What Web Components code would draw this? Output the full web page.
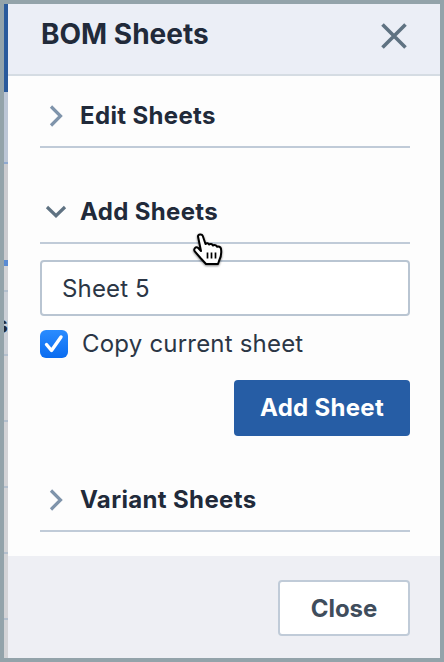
<!DOCTYPE html>
<html>
<head>
<meta charset="utf-8">
<title>BOM Sheets</title>
<style>
  html, body { margin: 0; height: 100%; }
  body { background: #93a3aa; font-family: Inter, "Liberation Sans", sans-serif; }
</style>
</head>
<body>
<bom-dialog>
  <sheet-section slot="sections" label="Edit Sheets"></sheet-section>
  <sheet-section slot="sections" label="Add Sheets" open>
    <add-sheet-form></add-sheet-form>
  </sheet-section>
  <sheet-section slot="sections" label="Variant Sheets"></sheet-section>
</bom-dialog>
<script>
// the sliver of the page that shows behind the dialog
class PageStrip extends HTMLElement {
  constructor() {
    super();
    this.attachShadow({ mode: "open" });
    const rows = [
      [88, "#2a5a9c"], [70, "#bcc6d6"], [2, "#8fa9d0"], [96, "#cbcbcf"], [6, "#5a8bd3"],
      [24, "#d3d3d6"], [2, "#b3bfcd"], [62, "#cbcfd6", "s"], [2, "#b3bfcd"], [64, "#d3d3d6"],
      [2, "#b3bfcd"], [64, "#d3d3d6"], [2, "#b3bfcd"], [64, "#d3d3d6"], [2, "#b3bfcd"],
      [64, "#d3d3d6"], [2, "#b3bfcd"], [38, "#d3d3d6"],
    ];
    this.shadowRoot.innerHTML = `
      <style>
        :host { display: flex; flex-direction: column; width: 4px; flex: none; overflow: hidden; }
        div { flex: none; display: flex; align-items: center; justify-content: flex-end; overflow: hidden; }
        span { color: #212a3a; font-size: 24px; font-weight: 700; line-height: 20px; flex: none; margin-top: 4px; }
      </style>
      ${rows.map(([h, c, t]) => `<div style="height:${h}px;background:${c}">${t ? `<span>${t}</span>` : ""}</div>`).join("")}`;
  }
}

class BomDialog extends HTMLElement {
  constructor() {
    super();
    this.attachShadow({ mode: "open" });
    this.shadowRoot.innerHTML = `
      <style>
        :host { display: flex; width: 444px; height: 662px; box-sizing: border-box; padding: 4px; position: relative; overflow: hidden; }
        .panel { flex: 1; display: flex; flex-direction: column; background: #fdfdfd; min-width: 0; }
        header { height: 70px; flex: none; box-sizing: content-box; background: #ebeef6; border-bottom: 2px solid #d5dce3; display: flex; align-items: flex-start; justify-content: space-between; padding: 0 33px 0 33px; color: #212a3a; font-size: 28px; font-weight: 700; line-height: 32px; }
        header span { margin-top: 14px; }
        header svg { display: block; margin-top: 19px; }
        .body { flex: 1; padding: 0 30px 0 32px; display: flex; flex-direction: column; }
        footer { height: 102px; flex: none; background: #eeeff4; display: flex; justify-content: flex-end; align-items: flex-start; box-sizing: border-box; padding: 24px 30px 0 0; }
        .close { width: 132px; height: 56px; box-sizing: border-box; border: 2px solid #c0cbd8; border-radius: 4px; background: #fff; color: #3f4d5c; font: 700 24px Inter, "Liberation Sans", sans-serif; }
      </style>
      <page-strip></page-strip>
      <div class="panel">
        <header><span>BOM Sheets</span>
          <svg width="26" height="26" viewBox="0 0 26 26"><path d="M1.5 1.5 L24.5 24.5 M24.5 1.5 L1.5 24.5" stroke="#5f7282" stroke-width="3.6" fill="none"/></svg>
        </header>
        <div class="body"><slot name="sections"></slot></div>
        <footer><button class="close">Close</button></footer>
      </div>
      <hand-cursor></hand-cursor>`;
  }
}

class SheetSection extends HTMLElement {
  constructor() {
    super();
    this.attachShadow({ mode: "open" });
  }
  connectedCallback() {
    const open = this.hasAttribute("open");
    const chevron = open
      ? `<path d="M7 9 L16 17.7 L25 9" stroke="#5f7282"/>`
      : `<path d="M11 4.5 L20.5 14 L11 23.5" stroke="#7f94ab"/>`;
    this.shadowRoot.innerHTML = `
      <style>
        :host { display: block; margin-bottom: 24px; }
        .title { height: 72px; box-sizing: border-box; padding-top: 24px; display: flex; align-items: flex-start; border-bottom: 2px solid #c0cbd8; color: #212a3a; font-size: 24px; font-weight: 700; line-height: 32px; letter-spacing: 0.35px; }
        .arrow { width: 40px; flex: none; }
        svg { display: block; margin-top: 2px; }
        :host(:not([open])) .content { display: none; }
      </style>
      <div class="title">
        <div class="arrow"><svg width="28" height="26" viewBox="0 0 28 26" fill="none" stroke-width="3.2">${chevron}</svg></div>
        <span>${this.getAttribute("label")}</span>
      </div>
      <div class="content"><slot></slot></div>`;
  }
}

class AddSheetForm extends HTMLElement {
  constructor() {
    super();
    this.attachShadow({ mode: "open" });
    this.shadowRoot.innerHTML = `
      <style>
        :host { display: block; padding-top: 16px; font-size: 24px; color: #2b3645; }
        input[type=text] { display: block; width: 100%; height: 56px; box-sizing: border-box; border: 2px solid #b9c5d2; border-radius: 4px; padding: 0 20px; background: #fff; color: #2b3645; font: 400 24px Inter, "Liberation Sans", sans-serif; letter-spacing: 0.15px; outline: none; }
        .check { display: flex; align-items: center; gap: 14px; margin-top: 14px; height: 28px; letter-spacing: 0.2px; }
        .check .label { padding-bottom: 2px; }
        .box { width: 28px; height: 28px; border-radius: 6px; background: linear-gradient(#2a8cff, #0a6cf0); display: flex; align-items: center; justify-content: center; }
        .actions { display: flex; justify-content: flex-end; margin-top: 22px; }
        .add { width: 176px; height: 56px; border: 0; border-radius: 4px; padding: 0 0 2px; background: #265da5; color: #fff; font: 700 24px Inter, "Liberation Sans", sans-serif; letter-spacing: 0.3px; }
      </style>
      <input type="text" value="Sheet 5">
      <div class="check">
        <span class="box"><svg width="20" height="20" viewBox="0 0 20 20"><path d="M2.5 10.5 L7.5 16.5 L17 3" stroke="#fff" stroke-width="3.4" fill="none" stroke-linecap="round" stroke-linejoin="round"/></svg></span>
        <span class="label">Copy current sheet</span>
      </div>
      <div class="actions"><button class="add">Add Sheet</button></div>`;
  }
}

// mouse pointer caught in the screenshot
class HandCursor extends HTMLElement {
  constructor() {
    super();
    this.attachShadow({ mode: "open" });
    this.shadowRoot.innerHTML = `
      <style>
        :host { position: absolute; left: 192px; top: 233px; width: 32px; height: 35px; pointer-events: none; }
        svg { display: block; filter: drop-shadow(0 1.5px 1.2px rgba(0,0,0,.5)); }
      </style>
      <svg width="32" height="35" viewBox="0 0 32 35">
        <path d="M6 3.5 C6 1.2 10 .8 10.8 3 L13.5 11 C14.5 9.8 16.6 10 17 11.6 C18 10.4 20.4 10.8 20.8 12.6 C22.2 11.6 24.6 12.2 25 13.8 C26.2 13 28.6 13.8 29 15.8 C29.6 19.5 29 24 27 28 L26 31 L14 31 L8.5 25 L2.8 18.4 C1.2 16 3.6 13 6.2 15 L9 18 Z" fill="#fff" stroke="#000" stroke-width="2" stroke-linejoin="round"/>
        <path d="M15.5 19.5 V25.5 M19.5 19.5 V25.5 M23.5 19.5 V25.5" stroke="#000" stroke-width="1.7" fill="none"/>
      </svg>`;
  }
}

customElements.define("page-strip", PageStrip);
customElements.define("hand-cursor", HandCursor);
customElements.define("bom-dialog", BomDialog);
customElements.define("sheet-section", SheetSection);
customElements.define("add-sheet-form", AddSheetForm);
</script>
</body>
</html>
